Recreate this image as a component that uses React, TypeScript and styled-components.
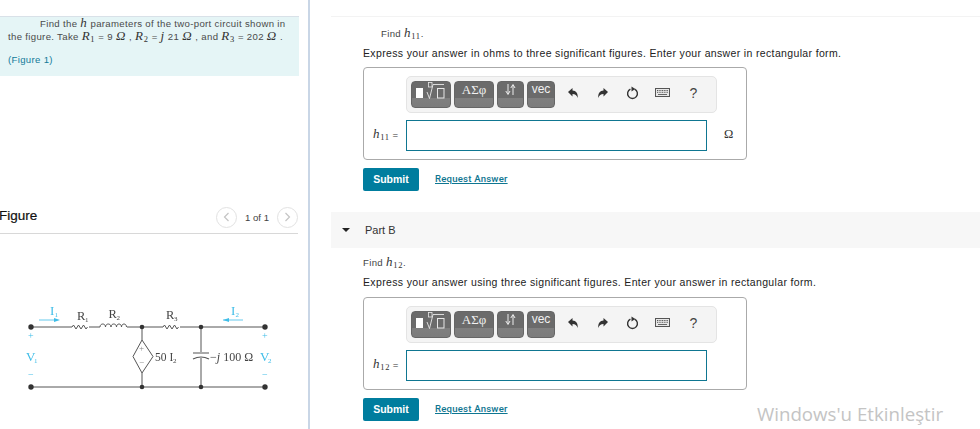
import React from "react";
import styled, { createGlobalStyle } from "styled-components";

const Global = createGlobalStyle`
  html, body { margin: 0; padding: 0; background: #fff; overflow: hidden; }
  body { font-family: "Liberation Sans", Arial, sans-serif; color: #333; }
  #root { width: 980px; height: 429px; overflow: hidden; }
`;

const Page = styled.div`
  display: flex;
  width: 980px;
  height: 429px;
  overflow: hidden;
`;

const LeftPane = styled.aside`
  width: 310px;
  flex: none;
  box-sizing: border-box;
  padding: 16px 9px 0 0;
  border-right: 2px solid #c9d6e6;
`;

const Prompt = styled.div`
  height: 60px;
  box-sizing: border-box;
  background: #e5f5f6;
  border-top: 1px solid #d9e1e8;
  padding: 0 0 0 8px;
  font-size: 9.6px;
  color: #4a4a4a;
  letter-spacing: 0.33px;
`;

const PromptLine = styled.div<{ $indent?: number }>`
  white-space: nowrap;
  height: 13px;
  line-height: 11px;
  padding-left: ${(p) => p.$indent ?? 0}px;
`;

const FigureLink = styled.div`
  margin-top: 10px;
  line-height: 14px;
  color: #127a99;
  white-space: nowrap;
`;

const MathVar = styled.i`
  font-family: "Liberation Serif", serif;
  font-size: 13px;
  color: #333;
  letter-spacing: 0.7px;
  sub {
    font-style: normal;
    font-size: 8.5px;
    line-height: 0;
    vertical-align: -2px;
  }
`;

const FigureHead = styled.div`
  display: flex;
  align-items: center;
  justify-content: space-between;
  margin-top: 121px;
  height: 37px;
  margin-left: -1px;
  box-sizing: border-box;
  border-bottom: 1px solid #d8d8d8;
  width: 299px;
`;

const FigureTitle = styled.h3`
  margin: 0;
  font-size: 13.5px;
  font-weight: 400;
  color: #111;
  -webkit-text-stroke: 0.2px #111;
`;

const Pager = styled.div`
  display: flex;
  align-items: center;
  gap: 8px;
  margin-top: 4px;
  font-size: 9.6px;
  color: #444;
`;

const PagerButton = styled.span`
  display: flex;
  align-items: center;
  justify-content: center;
  width: 21px;
  height: 21px;
  box-sizing: border-box;
  border: 1px solid #e2e2e2;
  border-radius: 50%;
`;

const CircuitBox = styled.div`
  margin-top: 61px;
  height: 100px;
  line-height: 0;
  filter: blur(0.35px);
`;

const RightPane = styled.main`
  flex: 1;
  min-width: 0;
  padding: 16px 0 0 21px;
`;

const PartBody = styled.section<{ $first?: boolean }>`
  box-sizing: border-box;
  padding-left: 32px;
  border-top: ${(p) => (p.$first ? "1px solid #f3f3f3" : "none")};
  padding-top: ${(p) => (p.$first ? "9px" : "7px")};
`;

const FindLine = styled.div<{ $indent?: number }>`
  font-size: 9.6px;
  line-height: 14px;
  height: 14px;
  color: #444;
  padding-left: ${(p) => p.$indent ?? 0}px;
  letter-spacing: 0.33px;
`;

const Instruction = styled.div`
  margin-top: 6px;
  font-size: 10.5px;
  line-height: 14px;
  height: 14px;
  color: #222;
  letter-spacing: 0.35px;
  white-space: nowrap;
`;

const AnswerBox = styled.div<{ $top: number }>`
  margin-top: ${(p) => p.$top}px;
  width: 384px;
  height: 93px;
  box-sizing: border-box;
  border: 1px solid #aaa;
  border-radius: 4px;
  padding: 8px 0 0 42px;
`;

const Toolbar = styled.div`
  width: 311px;
  height: 37px;
  box-sizing: border-box;
  background: #f4f4f4;
  border: 1px solid #e4e4e4;
  border-radius: 5px;
  display: flex;
  align-items: center;
  padding: 0 0 0 4px;
`;

const ToolButton = styled.span<{ $w: number; $gap?: number }>`
  width: ${(p) => p.$w}px;
  height: 27px;
  margin-right: ${(p) => p.$gap ?? 3}px;
  flex: none;
  box-sizing: border-box;
  border-radius: 4px;
  border: 1px solid #666;
  background: linear-gradient(#6b6b6b 0, #6b6b6b 62%, #7f7f7f 63%, #7c7c7c 100%);
  color: #f2f2f2;
  display: flex;
  justify-content: center;
  padding-top: 1px;
  font-size: 13px;
  line-height: 13px;
  font-family: "Liberation Serif", serif;
  overflow: hidden;
`;

const SqrtButton = styled(ToolButton)`
  padding-top: 0;
`;

const VecLabel = styled.span`
  font-family: "Liberation Sans", sans-serif;
  font-size: 12px;
  line-height: 12px;
`;

const ToolIcons = styled.div`
  display: flex;
  align-items: center;
  margin: -4px 0 0 8px;
`;

const ToolIcon = styled.span<{ $w: number }>`
  width: ${(p) => p.$w}px;
  display: flex;
  justify-content: center;
  align-items: center;
  line-height: 0;
  color: #333;
`;

const HelpMark = styled.span`
  font-size: 14px;
  line-height: 14px;
  color: #444;
`;

const InputRow = styled.div`
  display: flex;
  align-items: center;
  margin-top: 7px;
  margin-left: -42px;
  height: 31px;
`;

const InputLabel = styled.label`
  width: 42px;
  box-sizing: border-box;
  padding: 0 0 3px 9px;
  flex: none;
  font-size: 9.6px;
  white-space: nowrap;
  color: #333;
`;

const AnswerInput = styled.div`
  width: 301px;
  height: 31px;
  box-sizing: border-box;
  border: 1px solid #0f7691;
  background: #fff;
  flex: none;
`;

const Unit = styled.span`
  margin: 0 0 3px 17px;
  font-family: "Liberation Serif", serif;
  font-size: 12.5px;
  color: #333;
`;

const Actions = styled.div`
  margin-top: 8px;
  display: flex;
  align-items: center;
  height: 23px;
`;

const Submit = styled.button`
  width: 56px;
  height: 23px;
  border: none;
  border-radius: 2px;
  padding: 0 0 2px;
  background: #007d9e;
  color: #fff;
  font-family: "Liberation Sans", sans-serif;
  font-size: 10.5px;
  font-weight: 700;
`;

const RequestLink = styled.a`
  margin: 0 0 2px 16px;
  font-family: "Roboto", "Liberation Sans", sans-serif;
  font-size: 9.6px;
  font-weight: 500;
  color: #0f7691;
  text-decoration: underline;
  letter-spacing: 0.2px;
`;

const PartHeader = styled.div`
  margin-top: 21px;
  height: 36px;
  background: #f7f7f7;
  display: flex;
  align-items: center;
  font-size: 11px;
  color: #333;
`;

const Caret = styled.span`
  width: 0;
  height: 0;
  margin-left: 11px;
  margin-right: 15px;
  border-left: 4.5px solid transparent;
  border-right: 4.5px solid transparent;
  border-top: 4px solid #222;
`;

const Watermark = styled.div`
  position: absolute;
  left: 757px;
  top: 402px;
  font-family: "Open Sans", sans-serif;
  font-size: 18.7px;
  line-height: 24px;
  color: #c4c4c4;
  white-space: nowrap;
`;

const Sqrt = () => (
  <svg width="38" height="22" viewBox="0 0 38 22" fill="none">
    <rect x="4" y="6" width="7" height="10" fill="#fff" />
    <path d="M15 10l2.500 6.500 3.500-14h11" stroke="#e8e8e8" strokeWidth="0.9" />
    <rect x="25.500" y="6.500" width="6.500" height="9.500" stroke="#e8e8e8" />
    <rect x="16.500" y="0.500" width="3.500" height="4.500" stroke="#e8e8e8" strokeWidth="0.8" />
  </svg>
);

const Arrows = () => (
  <svg width="11" height="13" viewBox="0 0 11 13" fill="none">
    <path d="M3 1v10M3 11.500L0.800 8M3 11.500L5 8M8 12V2M8 1.500L5.800 5M8 1.500L10 5" stroke="#eee" strokeWidth="1" />
  </svg>
);

const Undo = () => (
  <svg width="12" height="12" viewBox="0 0 12 12">
    <path d="M1 5L5.500 1v2.600c3.600.2 5.500 2.700 5.300 7.400C9.800 8.400 8.200 7.200 5.500 7v2.400z" fill="#333" />
  </svg>
);

const Redo = () => (
  <svg width="12" height="12" viewBox="0 0 12 12">
    <path d="M11 5L6.500 1v2.600C2.900 3.800 1 6.300 1.200 11 2.200 8.400 3.800 7.200 6.500 7v2.400z" fill="#333" />
  </svg>
);

const Reset = () => (
  <svg width="13" height="14" viewBox="0 0 13 14" fill="none">
    <path d="M8.600 3.100a4.900 4.900 0 1 1-4.200 0" stroke="#333" strokeWidth="1.400" />
    <path d="M5.500 0.500L9.300 3 5.500 5.500z" fill="#333" />
  </svg>
);

const Keyboard = () => (
  <svg width="15" height="9" viewBox="0 0 15 9">
    <rect x="0.500" y="0.500" width="14" height="8" fill="#e8e8e8" stroke="#555" />
    <path d="M2 2.500h11M2 4.300h11" stroke="#555" strokeDasharray="1 0.700" />
    <path d="M3 6.500h9" stroke="#666" />
  </svg>
);

const Chevron = ({ dir }: { dir: "l" | "r" }) => (
  <svg width="7" height="10" viewBox="0 0 7 10" fill="none">
    <path d={dir === "l" ? "M5.500 1L1.500 5l4 4" : "M1.500 1l4 4-4 4"} stroke="#c4c4c4" strokeWidth="1.200" />
  </svg>
);

const Circuit = () => {
  const wire = "#555";
  const cyan = "#3fbde8";
  const serif = "Liberation Serif, serif";
  return (
    <svg width="298" height="100" viewBox="0 295 298 100" fill="none">
      <path
        d="M31 327H72M89 327H100M127 327H163M180 327H265M31 387H265M142 327V340M142 373V387M201 327V352M201 358V387"
        stroke={wire}
        strokeWidth="1"
      />
      <path d="M72 327l1.500-2 2.500 4 2.500-4 2.500 4 2.500-4 2.500 4 1.500-2M163 327l1.500-2 2.500 4 2.500-4 2.500 4 2.500-4 2.500 4 1.500-2" stroke={wire} strokeWidth="1" />
      <path d="M100 327c0-4 5.500-4 5.500 0c0-4 5.500-4 5.500 0c0-4 5.500-4 5.500 0c0-4 5-4 5 0c0-4 5-4 5 0" stroke={wire} strokeWidth="1" />
      <path d="M142 340L153 356.500L142 373L133 356.500Z" stroke={wire} strokeWidth="1" fill="#fff" />
      <path d="M193 353H209M193 359Q201 355 209 359" stroke={wire} strokeWidth="1.200" />
      <g fill="#333">
        <circle cx="31" cy="327" r="2.700" />
        <circle cx="31" cy="387" r="2.700" />
        <circle cx="142" cy="327" r="2.300" />
        <circle cx="142" cy="387" r="2.300" />
        <circle cx="201" cy="327" r="2.300" />
        <circle cx="201" cy="387" r="2.300" />
        <circle cx="265" cy="327" r="2.700" />
        <circle cx="265" cy="387" r="2.700" />
      </g>
      <path d="M39 320H56M223 320H243" stroke={cyan} strokeWidth="0.800" />
      <path d="M60 320l-6-2v4zM223 320l6-2v4z" fill={cyan} />
      <g fontFamily={serif} fontSize="12.500" fill="#444">
        <text x="77" y="320">R</text>
        <text x="85" y="322" fontSize="7">1</text>
        <text x="108.500" y="318">R</text>
        <text x="116.500" y="320" fontSize="7">2</text>
        <text x="166" y="319">R</text>
        <text x="174" y="321" fontSize="7">3</text>
        <text x="155" y="361" fontSize="11.500">50 I</text>
        <text x="173" y="363" fontSize="7">2</text>
        <text x="210" y="361" fontSize="12">−<tspan fontStyle="italic">j</tspan> 100 Ω</text>
        <text x="139" y="351" fontSize="9" fill="#888">+</text>
        <text x="139" y="365" fontSize="9" fill="#888">−</text>
      </g>
      <g fontFamily={serif} fontSize="13" fill={cyan}>
        <text x="50" y="315">I</text>
        <text x="54.500" y="317" fontSize="7">1</text>
        <text x="231" y="315">I</text>
        <text x="235.500" y="317" fontSize="7">2</text>
        <text x="26" y="361">V</text>
        <text x="34" y="363" fontSize="7">1</text>
        <text x="260" y="361">V</text>
        <text x="268" y="363" fontSize="7">2</text>
        <text x="28" y="339" fontSize="10">+</text>
        <text x="28" y="378" fontSize="10">−</text>
        <text x="262" y="339" fontSize="10">+</text>
        <text x="262" y="378" fontSize="10">−</text>
      </g>
    </svg>
  );
};

const AnswerEditor = ({ sub, unit, top }: { sub: string; unit?: boolean; top: number }) => (
  <AnswerBox $top={top}>
    <Toolbar>
      <SqrtButton $w={40}>
        <Sqrt />
      </SqrtButton>
      <ToolButton $w={40}>ΑΣφ</ToolButton>
      <ToolButton $w={27}>
        <Arrows />
      </ToolButton>
      <ToolButton $w={28} $gap={0}>
        <VecLabel>vec</VecLabel>
      </ToolButton>
      <ToolIcons>
        <ToolIcon $w={19}>
          <Undo />
        </ToolIcon>
        <ToolIcon $w={41}>
          <Redo />
        </ToolIcon>
        <ToolIcon $w={19}>
          <Reset />
        </ToolIcon>
        <ToolIcon $w={41}>
          <Keyboard />
        </ToolIcon>
        <ToolIcon $w={21}>
          <HelpMark>?</HelpMark>
        </ToolIcon>
      </ToolIcons>
    </Toolbar>
    <InputRow>
      <InputLabel>
        <MathVar>
          h<sub>{sub}</sub>
        </MathVar>{" "}
        =
      </InputLabel>
      <AnswerInput />
      {unit && <Unit>Ω</Unit>}
    </InputRow>
  </AnswerBox>
);

const Actionbar = () => (
  <Actions>
    <Submit>Submit</Submit>
    <RequestLink>Request Answer</RequestLink>
  </Actions>
);

export default function App() {
  return (
    <Page>
      <Global />
      <LeftPane>
        <Prompt>
          <PromptLine $indent={32}>
            Find the <MathVar>h</MathVar> parameters of the two-port circuit shown in
          </PromptLine>
          <PromptLine>
            the figure. Take{" "}
            <MathVar>
              R<sub>1</sub>
            </MathVar>{" "}
            = 9 <MathVar>Ω</MathVar> ,{" "}
            <MathVar>
              R<sub>2</sub>
            </MathVar>{" "}
            = <MathVar>j</MathVar> 21 <MathVar>Ω</MathVar> , and{" "}
            <MathVar>
              R<sub>3</sub>
            </MathVar>{" "}
            = 202 <MathVar>Ω</MathVar> .
          </PromptLine>
          <FigureLink>(Figure 1)</FigureLink>
        </Prompt>
        <FigureHead>
          <FigureTitle>Figure</FigureTitle>
          <Pager>
            <PagerButton>
              <Chevron dir="l" />
            </PagerButton>
            1 of 1
            <PagerButton>
              <Chevron dir="r" />
            </PagerButton>
          </Pager>
        </FigureHead>
        <CircuitBox>
          <Circuit />
        </CircuitBox>
      </LeftPane>
      <RightPane>
        <PartBody $first>
          <FindLine $indent={18}>
            Find{" "}
            <MathVar>
              h<sub>11</sub>
            </MathVar>
            .
          </FindLine>
          <Instruction>Express your answer in ohms to three significant figures. Enter your answer in rectangular form.</Instruction>
          <AnswerEditor sub="11" unit top={7} />
          <Actionbar />
        </PartBody>
        <PartHeader>
          <Caret />
          Part B
        </PartHeader>
        <PartBody>
          <FindLine>
            Find{" "}
            <MathVar>
              h<sub>12</sub>
            </MathVar>
            .
          </FindLine>
          <Instruction>Express your answer using three significant figures. Enter your answer in rectangular form.</Instruction>
          <AnswerEditor sub="12" top={8} />
          <Actionbar />
        </PartBody>
      </RightPane>
      <Watermark>Windows'u Etkinleştir</Watermark>
    </Page>
  );
}
